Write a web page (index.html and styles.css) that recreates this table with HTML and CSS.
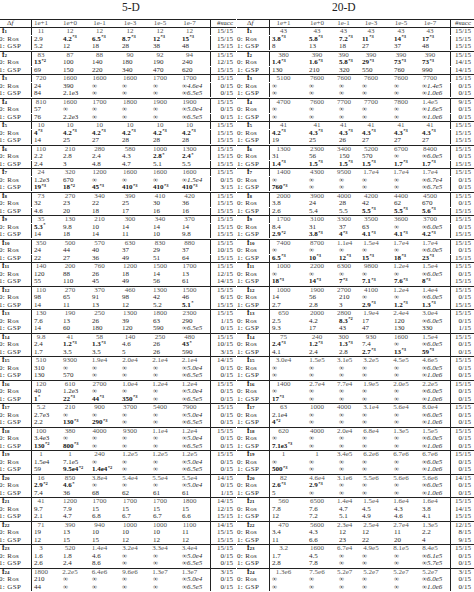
FILE: index.html
```html
<!DOCTYPE html>
<html>
<head>
<meta charset="utf-8">
<link rel="stylesheet" href="styles.css">
</head>
<body>
<div class="page">
<div class="tbl t5">
<div class="ttl">5-D</div>
<div class="r hd"><span>Δ<i>f</i></span><span>1e+1</span><span>1e+0</span><span>1e-1</span><span>1e-3</span><span>1e-5</span><span>1e-7</span><span>#succ</span></div>

<div class="blk"><div class="r fr"><span><b class="f">f</b><sub>1</sub></span><span>11</span><span>12</span><span>12</span><span>12</span><span>12</span><span>12</span><span>15/15</span></div>
<div class="r"><span>0: Ros</span><span>2.9</span><b>4.2<sup>*3</sup></b><b>6.5<sup>*3</sup></b><b>8.7<sup>*3</sup></b><b>12<sup>*3</sup></b><b>15<sup>*3</sup></b><span>15/15</span></div>
<div class="r"><span>1: GSP</span><span>5.2</span><span>12</span><span>18</span><span>28</span><span>38</span><span>48</span><span>15/15</span></div></div>

<div class="blk"><div class="r fr"><span><b class="f">f</b><sub>2</sub></span><span>83</span><span>87</span><span>88</span><span>90</span><span>92</span><span>94</span><span>15/15</span></div>
<div class="r"><span>0: Ros</span><b>13<sup>*2</sup></b><span>100</span><span>140</span><span>180</span><span>190</span><span>240</span><span>12/15</span></div>
<div class="r"><span>1: GSP</span><span>69</span><span>150</span><span>220</span><span>340</span><span>470</span><span>620</span><span>15/15</span></div></div>

<div class="blk"><div class="r fr"><span><b class="f">f</b><sub>3</sub></span><span>720</span><span>1600</span><span>1600</span><span>1600</span><span>1700</span><span>1700</span><span>15/15</span></div>
<div class="r"><span>0: Ros</span><span>24</span><span>390</span><span>∞</span><span>∞</span><span>∞</span><span>∞<i>4.6e4</i></span><span>0/15</span></div>
<div class="r"><span>1: GSP</span><span>84</span><span>2.1e3</span><span>∞</span><span>∞</span><span>∞</span><span>∞<i>6.5e5</i></span><span>0/15</span></div></div>

<div class="blk"><div class="r fr"><span><b class="f">f</b><sub>4</sub></span><span>810</span><span>1600</span><span>1700</span><span>1800</span><span>1900</span><span>1900</span><span>15/15</span></div>
<div class="r"><span>0: Ros</span><span>57</span><span>∞</span><span>∞</span><span>∞</span><span>∞</span><span>∞<i>5.0e4</i></span><span>0/15</span></div>
<div class="r"><span>1: GSP</span><span>76</span><span>2.2e3</span><span>∞</span><span>∞</span><span>∞</span><span>∞<i>6.5e5</i></span><span>0/15</span></div></div>

<div class="blk"><div class="r fr"><span><b class="f">f</b><sub>5</sub></span><span>10</span><span>10</span><span>10</span><span>10</span><span>10</span><span>10</span><span>15/15</span></div>
<div class="r"><span>0: Ros</span><b>4<sup>*3</sup></b><b>4.2<sup>*3</sup></b><b>4.2<sup>*3</sup></b><b>4.2<sup>*3</sup></b><b>4.2<sup>*3</sup></b><b>4.2<sup>*3</sup></b><span>15/15</span></div>
<div class="r"><span>1: GSP</span><span>14</span><span>25</span><span>27</span><span>28</span><span>28</span><span>28</span><span>15/15</span></div></div>

<div class="blk"><div class="r fr"><span><b class="f">f</b><sub>6</sub></span><span>110</span><span>210</span><span>280</span><span>580</span><span>1000</span><span>1300</span><span>15/15</span></div>
<div class="r"><span>0: Ros</span><span>2.2</span><span>2.8</span><span>2.4</span><span>4.3</span><b>2.8<sup>*</sup></b><b>2.4<sup>*</sup></b><span>15/15</span></div>
<div class="r"><span>1: GSP</span><span>2.4</span><span>3</span><span>4.8</span><span>4.7</span><span>5.1</span><span>5.5</span><span>15/15</span></div></div>

<div class="blk"><div class="r fr"><span><b class="f">f</b><sub>7</sub></span><span>24</span><span>320</span><span>1200</span><span>1600</span><span>1600</span><span>1600</span><span>15/15</span></div>
<div class="r"><span>0: Ros</span><span>1.2e3</span><span>670</span><span>∞</span><span>∞</span><span>∞</span><span>∞<i>1.5e4</i></span><span>0/15</span></div>
<div class="r"><span>1: GSP</span><b>19<sup>*3</sup></b><b>18<sup>*2</sup></b><b>45<sup>*3</sup></b><b>410<sup>*3</sup></b><b>410<sup>*3</sup></b><b>410<sup>*3</sup></b><span>3/15</span></div></div>

<div class="blk"><div class="r fr"><span><b class="f">f</b><sub>8</sub></span><span>73</span><span>270</span><span>340</span><span>390</span><span>410</span><span>420</span><span>15/15</span></div>
<div class="r"><span>0: Ros</span><span>32</span><span>23</span><span>22</span><span>25</span><span>30</span><span>36</span><span>15/15</span></div>
<div class="r"><span>1: GSP</span><span>4.6</span><span>20</span><span>18</span><span>17</span><span>16</span><span>16</span><span>15/15</span></div></div>

<div class="blk"><div class="r fr"><span><b class="f">f</b><sub>9</sub></span><span>35</span><span>130</span><span>210</span><span>300</span><span>340</span><span>370</span><span>15/15</span></div>
<div class="r"><span>0: Ros</span><b>5.3<sup>*</sup></b><span>9.8</span><span>10</span><span>14</span><span>14</span><span>14</span><span>15/15</span></div>
<div class="r"><span>1: GSP</span><span>14</span><span>18</span><span>14</span><span>11</span><span>10</span><span>9.8</span><span>15/15</span></div></div>

<div class="blk"><div class="r fr"><span><b class="f">f</b><sub>10</sub></span><span>350</span><span>500</span><span>570</span><span>630</span><span>830</span><span>880</span><span>15/15</span></div>
<div class="r"><span>0: Ros</span><span>24</span><span>44</span><span>40</span><span>37</span><span>29</span><span>37</span><span>10/15</span></div>
<div class="r"><span>1: GSP</span><span>22</span><span>27</span><span>36</span><span>49</span><span>51</span><span>64</span><span>15/15</span></div></div>

<div class="blk"><div class="r fr"><span><b class="f">f</b><sub>11</sub></span><span>140</span><span>200</span><span>760</span><span>1200</span><span>1500</span><span>1700</span><span>15/15</span></div>
<div class="r"><span>0: Ros</span><span>120</span><span>88</span><span>26</span><span>18</span><span>14</span><span>13</span><span>12/15</span></div>
<div class="r"><span>1: GSP</span><span>55</span><span>110</span><span>45</span><span>49</span><span>56</span><span>61</span><span>14/15</span></div></div>

<div class="blk"><div class="r fr"><span><b class="f">f</b><sub>12</sub></span><span>110</span><span>270</span><span>370</span><span>460</span><span>1300</span><span>1500</span><span>15/15</span></div>
<div class="r"><span>0: Ros</span><span>98</span><span>65</span><span>91</span><span>98</span><span>42</span><span>46</span><span>6/15</span></div>
<div class="r"><span>1: GSP</span><span>14</span><span>11</span><span>13</span><span>12</span><span>5.2</span><b>5.1<sup>*</sup></b><span>15/15</span></div></div>

<div class="blk"><div class="r fr"><span><b class="f">f</b><sub>13</sub></span><span>130</span><span>190</span><span>250</span><span>1300</span><span>1800</span><span>2300</span><span>15/15</span></div>
<div class="r"><span>0: Ros</span><span>7.6</span><span>13</span><span>26</span><span>39</span><span>63</span><span>290</span><span>1/15</span></div>
<div class="r"><span>1: GSP</span><span>14</span><span>60</span><span>180</span><span>120</span><span>590</span><span>∞<i>6.5e5</i></span><span>0/15</span></div></div>

<div class="blk"><div class="r fr"><span><b class="f">f</b><sub>14</sub></span><span>9.8</span><span>41</span><span>58</span><span>140</span><span>250</span><span>480</span><span>15/15</span></div>
<div class="r"><span>0: Ros</span><span>2.4</span><b>1.2<sup>*3</sup></b><b>1.3<sup>*3</sup></b><span>4.6</span><span>26</span><b>43<sup>*</sup></b><span>10/15</span></div>
<div class="r"><span>1: GSP</span><span>1.7</span><span>3.5</span><span>3.5</span><span>5</span><span>26</span><span>590</span><span>3/15</span></div></div>

<div class="blk"><div class="r fr"><span><b class="f">f</b><sub>15</sub></span><span>510</span><span>9300</span><span>1.9e4</span><span>2.0e4</span><span>2.1e4</span><span>2.1e4</span><span>14/15</span></div>
<div class="r"><span>0: Ros</span><span>310</span><span>∞</span><span>∞</span><span>∞</span><span>∞</span><span>∞<i>5.0e4</i></span><span>0/15</span></div>
<div class="r"><span>1: GSP</span><span>130</span><span>570</span><span>∞</span><span>∞</span><span>∞</span><span>∞<i>6.5e5</i></span><span>0/15</span></div></div>

<div class="blk"><div class="r fr"><span><b class="f">f</b><sub>16</sub></span><span>120</span><span>610</span><span>2700</span><span>1.0e4</span><span>1.2e4</span><span>1.2e4</span><span>15/15</span></div>
<div class="r"><span>0: Ros</span><span>40</span><span>1.2e3</span><span>∞</span><span>∞</span><span>∞</span><span>∞<i>5.0e4</i></span><span>0/15</span></div>
<div class="r"><span>1: GSP</span><b>1<sup>*</sup></b><b>22<sup>*3</sup></b><b>44<sup>*3</sup></b><b>350<sup>*3</sup></b><span>∞</span><span>∞<i>6.5e5</i></span><span>0/15</span></div></div>

<div class="blk"><div class="r fr"><span><b class="f">f</b><sub>17</sub></span><span>5.2</span><span>210</span><span>900</span><span>3700</span><span>5400</span><span>7900</span><span>15/15</span></div>
<div class="r"><span>0: Ros</span><span>2.7e3</span><span>∞</span><span>∞</span><span>∞</span><span>∞</span><span>∞<i>5.0e4</i></span><span>0/15</span></div>
<div class="r"><span>1: GSP</span><span>2.2</span><b>130<sup>*3</sup></b><b>290<sup>*3</sup></b><span>∞</span><span>∞</span><span>∞<i>6.5e5</i></span><span>0/15</span></div></div>

<div class="blk"><div class="r fr"><span><b class="f">f</b><sub>18</sub></span><span>100</span><span>380</span><span>4000</span><span>9300</span><span>1.1e4</span><span>1.2e4</span><span>15/15</span></div>
<div class="r"><span>0: Ros</span><span>3.4e3</span><span>∞</span><span>∞</span><span>∞</span><span>∞</span><span>∞<i>5.0e4</i></span><span>0/15</span></div>
<div class="r"><span>1: GSP</span><b>130<sup>*2</sup></b><b>800<sup>*3</sup></b><span>∞</span><span>∞</span><span>∞</span><span>∞<i>6.5e5</i></span><span>0/15</span></div></div>

<div class="blk"><div class="r fr"><span><b class="f">f</b><sub>19</sub></span><span>1</span><span>1</span><span>240</span><span>1.2e5</span><span>1.2e5</span><span>1.2e5</span><span>15/15</span></div>
<div class="r"><span>0: Ros</span><span>1.5e4</span><span>7.1e5</span><span>∞</span><span>∞</span><span>∞</span><span>∞<i>5.0e4</i></span><span>0/15</span></div>
<div class="r"><span>1: GSP</span><span>59</span><b>9.5e4<sup>*2</sup></b><b>1.4e4<sup>*2</sup></b><span>∞</span><span>∞</span><span>∞<i>6.5e5</i></span><span>0/15</span></div></div>

<div class="blk"><div class="r fr"><span><b class="f">f</b><sub>20</sub></span><span>16</span><span>850</span><span>3.8e4</span><span>5.4e4</span><span>5.5e4</span><span>5.5e4</span><span>14/15</span></div>
<div class="r"><span>0: Ros</span><b>2.9<sup>*2</sup></b><b>4.6<sup>*</sup></b><span>∞</span><span>∞</span><span>∞</span><span>∞<i>5.0e4</i></span><span>0/15</span></div>
<div class="r"><span>1: GSP</span><span>7.4</span><span>36</span><span>68</span><span>62</span><span>61</span><span>61</span><span>1/15</span></div></div>

<div class="blk"><div class="r fr"><span><b class="f">f</b><sub>21</sub></span><span>41</span><span>1200</span><span>1700</span><span>1700</span><span>1700</span><span>1800</span><span>14/15</span></div>
<div class="r"><span>0: Ros</span><span>9.7</span><span>7.9</span><span>15</span><span>15</span><span>15</span><span>15</span><span>12/15</span></div>
<div class="r"><span>1: GSP</span><span>2.1</span><span>4.7</span><span>6.8</span><span>6.7</span><span>6.7</span><span>6.6</span><span>15/15</span></div></div>

<div class="blk"><div class="r fr"><span><b class="f">f</b><sub>22</sub></span><span>71</span><span>390</span><span>940</span><span>1000</span><span>1000</span><span>1100</span><span>14/15</span></div>
<div class="r"><span>0: Ros</span><span>19</span><span>13</span><span>10</span><span>10</span><span>10</span><span>11</span><span>15/15</span></div>
<div class="r"><span>1: GSP</span><span>12</span><span>15</span><span>15</span><span>12</span><span>12</span><span>12</span><span>15/15</span></div></div>

<div class="blk"><div class="r fr"><span><b class="f">f</b><sub>23</sub></span><span>3</span><span>520</span><span>1.4e4</span><span>3.2e4</span><span>3.3e4</span><span>3.4e4</span><span>15/15</span></div>
<div class="r"><span>0: Ros</span><span>1.6</span><span>1.8</span><span>4.6</span><span>∞</span><span>∞</span><span>∞<i>5.0e4</i></span><span>0/15</span></div>
<div class="r"><span>1: GSP</span><span>2.6</span><span>2.4</span><span>8.6</span><span>∞</span><span>∞</span><span>∞<i>6.5e5</i></span><span>0/15</span></div></div>

<div class="blk"><div class="r fr"><span><b class="f">f</b><sub>24</sub></span><span>1800</span><span>2.2e5</span><span>6.4e6</span><span>9.6e6</span><span>1.3e7</span><span>1.3e7</span><span>3/15</span></div>
<div class="r"><span>0: Ros</span><span>210</span><span>∞</span><span>∞</span><span>∞</span><span>∞</span><span>∞<i>5.0e4</i></span><span>0/15</span></div>
<div class="r"><span>1: GSP</span><span>44</span><span>∞</span><span>∞</span><span>∞</span><span>∞</span><span>∞<i>6.5e5</i></span><span>0/15</span></div></div>
</div>

<div class="tbl t20">
<div class="ttl">20-D</div>
<div class="r hd"><span>Δ<i>f</i></span><span>1e+1</span><span>1e+0</span><span>1e-1</span><span>1e-3</span><span>1e-5</span><span>1e-7</span><span>#succ</span></div>

<div class="blk"><div class="r fr"><span><b class="f">f</b><sub>1</sub></span><span>43</span><span>43</span><span>43</span><span>43</span><span>43</span><span>43</span><span>15/15</span></div>
<div class="r"><span>0: Ros</span><b>3.8<sup>*3</sup></b><b>5.8<sup>*3</sup></b><b>7.2<sup>*3</sup></b><b>11<sup>*3</sup></b><b>14<sup>*3</sup></b><b>17<sup>*3</sup></b><span>15/15</span></div>
<div class="r"><span>1: GSP</span><span>8</span><span>13</span><span>18</span><span>27</span><span>37</span><span>48</span><span>15/15</span></div></div>

<div class="blk"><div class="r fr"><span><b class="f">f</b><sub>2</sub></span><span>380</span><span>390</span><span>390</span><span>390</span><span>390</span><span>390</span><span>15/15</span></div>
<div class="r"><span>0: Ros</span><b>1.4<sup>*3</sup></b><b>1.6<sup>*3</sup></b><b>5.8<sup>*3</sup></b><b>29<sup>*3</sup></b><b>73<sup>*3</sup></b><b>73<sup>*3</sup></b><span>14/15</span></div>
<div class="r"><span>1: GSP</span><span>130</span><span>210</span><span>320</span><span>550</span><span>760</span><span>990</span><span>14/15</span></div></div>

<div class="blk"><div class="r fr"><span><b class="f">f</b><sub>3</sub></span><span>5100</span><span>7600</span><span>7600</span><span>7600</span><span>7600</span><span>7700</span><span>15/15</span></div>
<div class="r"><span>0: Ros</span><span>∞</span><span>∞</span><span>∞</span><span>∞</span><span>∞</span><span>∞<i>1.4e5</i></span><span>0/15</span></div>
<div class="r"><span>1: GSP</span><span>∞</span><span>∞</span><span>∞</span><span>∞</span><span>∞</span><span>∞<i>1.0e6</i></span><span>0/15</span></div></div>

<div class="blk"><div class="r fr"><span><b class="f">f</b><sub>4</sub></span><span>4700</span><span>7600</span><span>7700</span><span>7700</span><span>7800</span><span>1.4e5</span><span>9/15</span></div>
<div class="r"><span>0: Ros</span><span>∞</span><span>∞</span><span>∞</span><span>∞</span><span>∞</span><span>∞<i>1.6e5</i></span><span>0/15</span></div>
<div class="r"><span>1: GSP</span><span>∞</span><span>∞</span><span>∞</span><span>∞</span><span>∞</span><span>∞<i>1.0e6</i></span><span>0/15</span></div></div>

<div class="blk"><div class="r fr"><span><b class="f">f</b><sub>5</sub></span><span>41</span><span>41</span><span>41</span><span>41</span><span>41</span><span>41</span><span>15/15</span></div>
<div class="r"><span>0: Ros</span><b>4.2<sup>*3</sup></b><b>4.3<sup>*3</sup></b><b>4.3<sup>*3</sup></b><b>4.3<sup>*3</sup></b><b>4.3<sup>*3</sup></b><b>4.3<sup>*3</sup></b><span>15/15</span></div>
<div class="r"><span>1: GSP</span><span>19</span><span>25</span><span>26</span><span>27</span><span>27</span><span>27</span><span>15/15</span></div></div>

<div class="blk"><div class="r fr"><span><b class="f">f</b><sub>6</sub></span><span>1300</span><span>2300</span><span>3400</span><span>5200</span><span>6700</span><span>8400</span><span>15/15</span></div>
<div class="r"><span>0: Ros</span><span>31</span><span>56</span><span>150</span><span>570</span><span>∞</span><span>∞<i>6.0e5</i></span><span>0/15</span></div>
<div class="r"><span>1: GSP</span><b>1.4<sup>*3</sup></b><b>1.5<sup>*3</sup></b><b>1.5<sup>*3</sup></b><b>1.5<sup>*3</sup></b><b>1.7<sup>*3</sup></b><b>1.7<sup>*3</sup></b><span>15/15</span></div></div>

<div class="blk"><div class="r fr"><span><b class="f">f</b><sub>7</sub></span><span>1400</span><span>4300</span><span>9500</span><span>1.7e4</span><span>1.7e4</span><span>1.7e4</span><span>15/15</span></div>
<div class="r"><span>0: Ros</span><span>∞</span><span>∞</span><span>∞</span><span>∞</span><span>∞</span><span>∞<i>6.7e4</i></span><span>0/15</span></div>
<div class="r"><span>1: GSP</span><b>760<sup>*3</sup></b><span>∞</span><span>∞</span><span>∞</span><span>∞</span><span>∞<i>6.7e5</i></span><span>0/15</span></div></div>

<div class="blk"><div class="r fr"><span><b class="f">f</b><sub>8</sub></span><span>2000</span><span>3900</span><span>4000</span><span>4200</span><span>4400</span><span>4500</span><span>15/15</span></div>
<div class="r"><span>0: Ros</span><span>3.8</span><span>24</span><span>28</span><span>42</span><span>62</span><span>670</span><span>0/15</span></div>
<div class="r"><span>1: GSP</span><span>2.6</span><span>5.4</span><span>5.5</span><b>5.5<sup>*3</sup></b><b>5.5<sup>*3</sup></b><b>5.6<sup>*3</sup></b><span>15/15</span></div></div>

<div class="blk"><div class="r fr"><span><b class="f">f</b><sub>9</sub></span><span>1700</span><span>3100</span><span>3300</span><span>3500</span><span>3600</span><span>3700</span><span>15/15</span></div>
<div class="r"><span>0: Ros</span><span>8.4</span><span>31</span><span>37</span><span>63</span><span>∞</span><span>∞<i>6.0e5</i></span><span>0/15</span></div>
<div class="r"><span>1: GSP</span><b>2.9<sup>*2</sup></b><b>3.8<sup>*3</sup></b><b>4<sup>*3</sup></b><b>4.1<sup>*3</sup></b><b>4.1<sup>*3</sup></b><b>4.2<sup>*3</sup></b><span>15/15</span></div></div>

<div class="blk"><div class="r fr"><span><b class="f">f</b><sub>10</sub></span><span>7400</span><span>8700</span><span>1.1e4</span><span>1.5e4</span><span>1.7e4</span><span>1.7e4</span><span>15/15</span></div>
<div class="r"><span>0: Ros</span><span>∞</span><span>∞</span><span>∞</span><span>∞</span><span>∞</span><span>∞<i>6.0e5</i></span><span>0/15</span></div>
<div class="r"><span>1: GSP</span><b>6.5<sup>*3</sup></b><b>10<sup>*3</sup></b><b>12<sup>*3</sup></b><b>15<sup>*3</sup></b><b>18<sup>*3</sup></b><b>23<sup>*3</sup></b><span>15/15</span></div></div>

<div class="blk"><div class="r fr"><span><b class="f">f</b><sub>11</sub></span><span>1000</span><span>2200</span><span>6300</span><span>9800</span><span>1.2e4</span><span>1.5e4</span><span>15/15</span></div>
<div class="r"><span>0: Ros</span><span>∞</span><span>∞</span><span>∞</span><span>∞</span><span>∞</span><span>∞<i>6.0e5</i></span><span>0/15</span></div>
<div class="r"><span>1: GSP</span><b>18<sup>*3</sup></b><b>14<sup>*3</sup></b><b>7<sup>*3</sup></b><b>7.1<sup>*3</sup></b><b>7.6<sup>*3</sup></b><b>8<sup>*3</sup></b><span>15/15</span></div></div>

<div class="blk"><div class="r fr"><span><b class="f">f</b><sub>12</sub></span><span>1000</span><span>1900</span><span>2700</span><span>4100</span><span>1.2e4</span><span>1.4e4</span><span>15/15</span></div>
<div class="r"><span>0: Ros</span><span>14</span><span>56</span><span>210</span><span>∞</span><span>∞</span><span>∞<i>6.0e5</i></span><span>0/15</span></div>
<div class="r"><span>1: GSP</span><span>2.7</span><span>2.8</span><span>3</span><b>2.9<sup>*3</sup></b><b>1.2<sup>*3</sup></b><b>1.3<sup>*3</sup></b><span>15/15</span></div></div>

<div class="blk"><div class="r fr"><span><b class="f">f</b><sub>13</sub></span><span>650</span><span>2000</span><span>2800</span><span>1.9e4</span><span>2.4e4</span><span>3.0e4</span><span>15/15</span></div>
<div class="r"><span>0: Ros</span><span>2.5</span><span>4.2</span><b>8.3<sup>*2</sup></b><span>17</span><span>120</span><span>∞<i>6.0e5</i></span><span>0/15</span></div>
<div class="r"><span>1: GSP</span><span>9.3</span><span>17</span><span>43</span><span>47</span><span>130</span><span>330</span><span>1/15</span></div></div>

<div class="blk"><div class="r fr"><span><b class="f">f</b><sub>14</sub></span><span>75</span><span>240</span><span>300</span><span>930</span><span>1600</span><span>1.5e4</span><span>15/15</span></div>
<div class="r"><span>0: Ros</span><b>2.4<sup>*3</sup></b><b>1.2<sup>*3</sup></b><b>1.3<sup>*3</sup></b><span>7.4</span><span>∞</span><span>∞<i>6.0e5</i></span><span>0/15</span></div>
<div class="r"><span>1: GSP</span><span>4.1</span><span>2.4</span><span>2.8</span><b>2.7<sup>*3</sup></b><b>13<sup>*3</sup></b><b>59<sup>*3</sup></b><span>0/15</span></div></div>

<div class="blk"><div class="r fr"><span><b class="f">f</b><sub>15</sub></span><span>3.0e4</span><span>1.5e5</span><span>3.1e5</span><span>3.2e5</span><span>4.5e5</span><span>4.6e5</span><span>15/15</span></div>
<div class="r"><span>0: Ros</span><span>∞</span><span>∞</span><span>∞</span><span>∞</span><span>∞</span><span>∞<i>6.0e5</i></span><span>0/15</span></div>
<div class="r"><span>1: GSP</span><span>∞</span><span>∞</span><span>∞</span><span>∞</span><span>∞</span><span>∞<i>1.0e6</i></span><span>0/15</span></div></div>

<div class="blk"><div class="r fr"><span><b class="f">f</b><sub>16</sub></span><span>1400</span><span>2.7e4</span><span>7.7e4</span><span>1.9e5</span><span>2.0e5</span><span>2.2e5</span><span>15/15</span></div>
<div class="r"><span>0: Ros</span><span>∞</span><span>∞</span><span>∞</span><span>∞</span><span>∞</span><span>∞<i>6.0e5</i></span><span>0/15</span></div>
<div class="r"><span>1: GSP</span><b>17<sup>*3</sup></b><span>∞</span><span>∞</span><span>∞</span><span>∞</span><span>∞<i>1.0e6</i></span><span>0/15</span></div></div>

<div class="blk"><div class="r fr"><span><b class="f">f</b><sub>17</sub></span><span>63</span><span>1000</span><span>4000</span><span>3.1e4</span><span>5.6e4</span><span>8.0e4</span><span>15/15</span></div>
<div class="r"><span>0: Ros</span><span>2.1e4</span><span>∞</span><span>∞</span><span>∞</span><span>∞</span><span>∞<i>6.0e5</i></span><span>0/15</span></div>
<div class="r"><span>1: GSP</span><b>4<sup>*2</sup></b><span>∞</span><span>∞</span><span>∞</span><span>∞</span><span>∞<i>1.0e6</i></span><span>0/15</span></div></div>

<div class="blk"><div class="r fr"><span><b class="f">f</b><sub>18</sub></span><span>620</span><span>4000</span><span>2.0e4</span><span>6.8e4</span><span>1.3e5</span><span>1.5e5</span><span>15/15</span></div>
<div class="r"><span>0: Ros</span><span>∞</span><span>∞</span><span>∞</span><span>∞</span><span>∞</span><span>∞<i>6.0e5</i></span><span>0/15</span></div>
<div class="r"><span>1: GSP</span><b>7.1e3<sup>*3</sup></b><span>∞</span><span>∞</span><span>∞</span><span>∞</span><span>∞<i>1.0e6</i></span><span>0/15</span></div></div>

<div class="blk"><div class="r fr"><span><b class="f">f</b><sub>19</sub></span><span>1</span><span>1</span><span>3.4e5</span><span>6.2e6</span><span>6.7e6</span><span>6.7e6</span><span>15/15</span></div>
<div class="r"><span>0: Ros</span><span>∞</span><span>∞</span><span>∞</span><span>∞</span><span>∞</span><span>∞<i>6.0e5</i></span><span>0/15</span></div>
<div class="r"><span>1: GSP</span><b>500<sup>*3</sup></b><span>∞</span><span>∞</span><span>∞</span><span>∞</span><span>∞<i>1.0e6</i></span><span>0/15</span></div></div>

<div class="blk"><div class="r fr"><span><b class="f">f</b><sub>20</sub></span><span>82</span><span>4.6e4</span><span>3.1e6</span><span>5.5e6</span><span>5.6e6</span><span>5.6e6</span><span>14/15</span></div>
<div class="r"><span>0: Ros</span><b>2.6<sup>*3</sup></b><b>2.9<sup>*3</sup></b><span>∞</span><span>∞</span><span>∞</span><span>∞<i>6.0e5</i></span><span>0/15</span></div>
<div class="r"><span>1: GSP</span><span>5</span><span>∞</span><span>∞</span><span>∞</span><span>∞</span><span>∞<i>1.0e6</i></span><span>0/15</span></div></div>

<div class="blk"><div class="r fr"><span><b class="f">f</b><sub>21</sub></span><span>560</span><span>6500</span><span>1.4e4</span><span>1.5e4</span><span>1.6e4</span><span>1.6e4</span><span>15/15</span></div>
<div class="r"><span>0: Ros</span><span>7.8</span><span>7.6</span><span>4.7</span><span>4.5</span><span>4.3</span><span>3.8</span><span>14/15</span></div>
<div class="r"><span>1: GSP</span><span>12</span><span>7.2</span><span>5.1</span><span>4.9</span><span>4.6</span><span>4.1</span><span>15/15</span></div></div>

<div class="blk"><div class="r fr"><span><b class="f">f</b><sub>22</sub></span><span>470</span><span>5600</span><span>2.3e4</span><span>2.5e4</span><span>2.7e4</span><span>1.3e5</span><span>12/15</span></div>
<div class="r"><span>0: Ros</span><span>3.4</span><span>4.3</span><span>12</span><span>12</span><span>11</span><span>2.2</span><span>8/15</span></div>
<div class="r"><span>1: GSP</span><span>11</span><span>6.6</span><span>23</span><span>22</span><span>20</span><span>4</span><span>9/15</span></div></div>

<div class="blk"><div class="r fr"><span><b class="f">f</b><sub>23</sub></span><span>3.2</span><span>1600</span><span>6.7e4</span><span>4.9e5</span><span>8.1e5</span><span>8.4e5</span><span>15/15</span></div>
<div class="r"><span>0: Ros</span><span>1.7</span><span>4.5</span><span>∞</span><span>∞</span><span>∞</span><span>∞<i>6.1e5</i></span><span>0/15</span></div>
<div class="r"><span>1: GSP</span><span>2.8</span><span>7.8</span><span>∞</span><span>∞</span><span>∞</span><span>∞<i>5.7e5</i></span><span>0/15</span></div></div>

<div class="blk"><div class="r fr"><span><b class="f">f</b><sub>24</sub></span><span>1.3e6</span><span>7.5e6</span><span>5.2e7</span><span>5.2e7</span><span>5.2e7</span><span>5.2e7</span><span>3/15</span></div>
<div class="r"><span>0: Ros</span><span>∞</span><span>∞</span><span>∞</span><span>∞</span><span>∞</span><span>∞<i>6.0e5</i></span><span>0/15</span></div>
<div class="r"><span>1: GSP</span><span>∞</span><span>∞</span><span>∞</span><span>∞</span><span>∞</span><span>∞<i>1.0e6</i></span><span>0/15</span></div></div>
</div>
</div>
</body>
</html>
```
FILE: styles.css
```css
* { box-sizing: border-box; }
html, body { margin: 0; padding: 0; background: #fff; }
body {
  color: #2a2a2a;
  font-family: "Liberation Serif", "Times New Roman", serif;
  overflow: hidden;
  width: 474px;
  height: 592px;
}
.page { display: flex; gap: 1px; margin-left: -1px; }
.tbl { width: 237px; flex: none; }
.ttl {
  height: 19px;
  font-size: 11.5px;
  line-height: 12px;
  padding-top: 1px;
  color: #222;
}
.t5 .ttl { padding-left: 123px; }
.t20 .ttl { padding-left: 95px; }

.r {
  display: grid;
  height: 7.34px;
  font-size: 7px;
  line-height: 7.34px;
  white-space: nowrap;
}
.t5 .r { grid-template-columns: 33px 29px 29px 30px 31px 29px 30px 26px; }
.t20 .r { grid-template-columns: 33px 37px 30px 23px 32px 28px 30px 24px; }

.r > * { padding-left: 2px; overflow: visible; }
.r > b { color: #111; font-weight: bold; }
.r > span i { font-style: italic; }
.r > :first-child {
  border-right: 1px solid #222;
  padding-left: 0;
  letter-spacing: 0.35px;
  text-align: left;
}
.r > :last-child {
  border-left: 1.5px solid #222;
  text-align: right;
  padding: 0 3px 0 0;
}

.hd {
  height: 8px;
  line-height: 7px;
  border-top: 1px solid #222;
}
.hd > *, .fr > * { text-align: center; padding: 0 11px 0 0; color: #555; }
.t20 .hd > *, .t20 .fr > * { padding-right: 10px; }
.r.hd > :first-child { padding-left: 8px; color: #333; letter-spacing: 0; }
.t20 .r.hd > :first-child { padding-left: 10px; }
.r.fr > :first-child { padding-left: 3px; color: #222; letter-spacing: 0; }
.t20 .r.fr > :first-child { padding-left: 10px; }
.r.hd > :last-child, .r.fr > :last-child { text-align: right; padding: 0 3px 0 0; color: #333; }

.blk {
  height: 23.52px;
  border-top: 1.5px solid #222;
  display: grid;
  grid-template-rows: repeat(3, 1fr);
}

sup {
  font-size: 4.5px;
  line-height: 0;
  vertical-align: 2.5px;
  margin-left: 0.5px;
}
.f { font-size: 7.5px; font-weight: bold; color: #222; line-height: 0; }
sub {
  font-size: 5px;
  font-weight: bold;
  line-height: 0;
  vertical-align: 0;
}
```
